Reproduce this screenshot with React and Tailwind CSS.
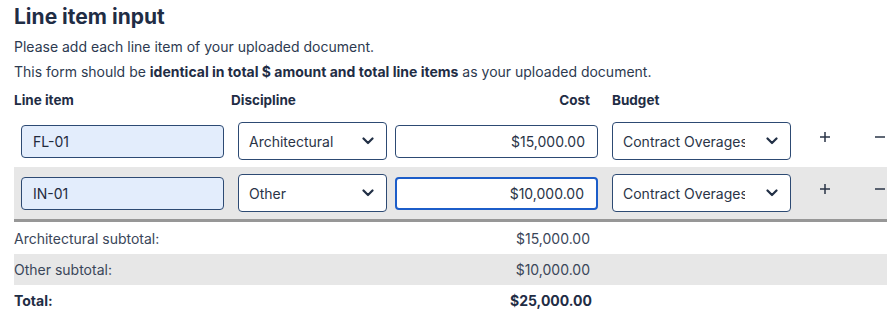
import React from "react";

const Chevron = () => (
  <svg width="12" height="8" viewBox="0 0 12 8" className="shrink-0">
    <path d="M1.5 1.5 L6 6 L10.5 1.5" fill="none" stroke="#223046" strokeWidth="2.2" strokeLinecap="round" strokeLinejoin="round" />
  </svg>
);

const Plus = () => (
  <svg width="12" height="12" viewBox="0 0 12 12">
    <path d="M6 1 V11 M1 6 H11" stroke="#2a3447" strokeWidth="1.5" />
  </svg>
);

const Minus = () => (
  <svg width="10" height="12" viewBox="0 0 10 12">
    <path d="M0 6 H10" stroke="#2a3447" strokeWidth="1.5" />
  </svg>
);

function Row({ code, disc, cost, gray, focus }) {
  return (
    <div className={`flex items-center h-[52px] pl-[7px] ${gray ? "bg-[#e7e7e7]" : "bg-white"}`}>
      <div className="w-[203px] h-[33px] rounded-[4px] border border-[#2d4a73] bg-[#e3edfc] flex items-center pl-[11px] text-[14px] text-[#1f2a3d]">
        {code}
      </div>
      <div className="ml-[14px] w-[149px] h-[38px] rounded-[4px] border border-[#2d4a73] bg-white flex items-center justify-between pl-[10px] pr-[12px] text-[14px] text-[#2a3447]">
        <span>{disc}</span>
        <Chevron />
      </div>
      <div
        className={`ml-[8px] w-[203px] h-[33px] rounded-[4px] bg-white flex items-center justify-end pr-[12px] text-[14px] text-[#2a3447] ${
          focus ? "border-2 border-[#1c5dc9]" : "border border-[#2d4a73]"
        }`}
      >
        {cost}
      </div>
      <div className="ml-[14px] w-[179px] h-[38px] rounded-[4px] border border-[#2d4a73] bg-white flex items-center pl-[10px] pr-[12px] text-[14px] text-[#2a3447]">
        <span className="w-[122px] overflow-hidden whitespace-nowrap">Contract Overages</span>
        <span className="ml-auto flex">
          <Chevron />
        </span>
      </div>
      <div className="ml-[28px] flex items-center mt-[-8px]">
        <Plus />
      </div>
      <div className="ml-[44px] flex items-center mt-[-8px]">
        <Minus />
      </div>
    </div>
  );
}

export default function App() {
  return (
    <div
      className="w-[889px] h-[334px] bg-white overflow-hidden text-[#223046]"
      style={{ fontFamily: "Inter, 'Noto Sans', sans-serif" }}
    >
      <div className="pl-[14px] w-[887px]">
        <h1 className="text-[21px] font-bold leading-[24px] pt-[5px] text-[#1f2d45]">Line item input</h1>
        <p className="text-[14px] leading-[20px] mt-[8px] text-[#2d3a50]">Please add each line item of your uploaded document.</p>
        <p className="text-[14px] leading-[20px] mt-[5px] text-[#2d3a50]">
          This form should be <span className="font-bold text-[#1f2d45]">identical in total $ amount and total line items</span> as your uploaded document.
        </p>
        <div className="flex items-center h-[20px] mt-[8px] text-[13.5px] font-bold text-[#1f2d45]">
          <div className="w-[217px]">Line item</div>
          <div className="w-[150px]">Discipline</div>
          <div className="w-[209px] text-right">Cost</div>
          <div className="ml-[22px]">Budget</div>
        </div>
        <div className="mt-[5px]">
          <Row code="FL-01" disc="Architectural" cost="$15,000.00" />
          <Row code="IN-01" disc="Other" cost="$10,000.00" gray focus />
        </div>
        <div className="h-[3px] bg-[#979797]" />
        <div className="text-[14px] text-[#3a4659]">
          <div className="flex items-center h-[32px]">
            <div className="w-[496px]">Architectural subtotal:</div>
            <div className="w-[80px] text-right">$15,000.00</div>
          </div>
          <div className="flex items-center h-[31px] bg-[#e7e7e7]">
            <div className="w-[496px]">Other subtotal:</div>
            <div className="w-[80px] text-right">$10,000.00</div>
          </div>
          <div className="flex items-center h-[31px] font-bold text-[#1f2d45]">
            <div className="w-[496px]">Total:</div>
            <div className="w-[80px] text-right">$25,000.00</div>
          </div>
        </div>
      </div>
    </div>
  );
}
